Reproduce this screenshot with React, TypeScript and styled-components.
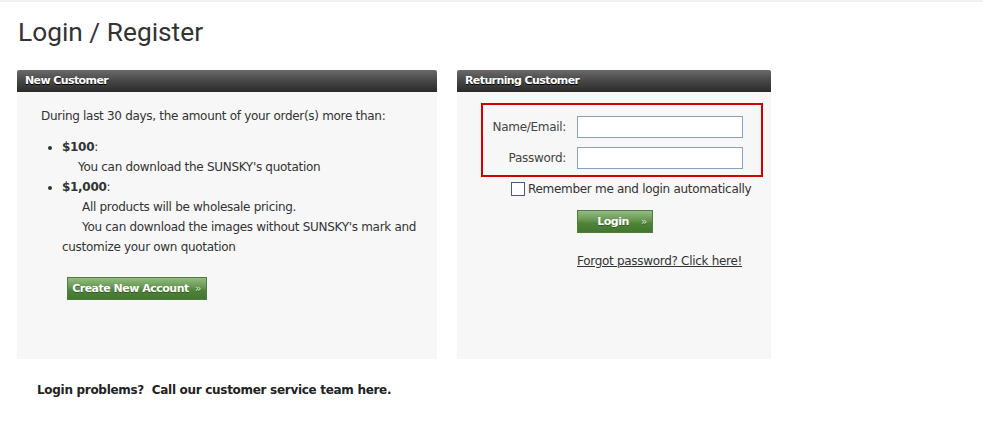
import styled, { createGlobalStyle } from "styled-components";

const GlobalStyle = createGlobalStyle`
  html, body {
    margin: 0;
    padding: 0;
    background: #fff;
  }
  body {
    font-family: "DejaVu Sans", Verdana, sans-serif;
    font-size: 12px;
    letter-spacing: -0.3px;
    color: #333;
  }
`;

const Page = styled.div`
  width: 983px;
  border-top: 2px solid #f0f0f0;
  padding: 0 0 0 17px;
  box-sizing: border-box;
`;

const Title = styled.h1`
  margin: 0;
  padding: 14px 0 0 1px;
  height: 68px;
  box-sizing: border-box;
  font-family: Roboto, "Liberation Sans", sans-serif;
  font-size: 26.3px;
  font-weight: normal;
  letter-spacing: 0;
  color: #333;
  line-height: 32px;
`;

const Columns = styled.div`
  display: flex;
  gap: 20px;
  align-items: stretch;
`;

const Panel = styled.section<{ $width: number }>`
  width: ${(p) => p.$width}px;
  height: 289px;
  display: flex;
  flex-direction: column;
  background: #f7f7f7;
`;

const PanelHeader = styled.div`
  height: 22px;
  line-height: 22px;
  padding-left: 8px;
  border-radius: 2px 2px 0 0;
  background: linear-gradient(#6a6a6a, #474747 50%, #2a2a2a);
  color: #fff;
  font-size: 11px;
  font-weight: bold;
  letter-spacing: -0.6px;
  text-shadow: 0 1px 0 #000;
`;

const NewBody = styled.div`
  padding: 14px 0 0 24px;
  line-height: 20px;
`;

const Intro = styled.p`
  margin: 0 0 11px;
`;

const Tiers = styled.ul`
  margin: 0;
  padding: 0 0 0 21px;
  list-style: disc;
`;

const Tier = styled.li`
  strong {
    font-weight: bold;
  }
`;

const Indent = styled.div<{ $indent: number }>`
  padding-left: ${(p) => p.$indent}px;
`;

const GreenButton = styled.button<{ $width: number; $gap: number }>`
  display: inline-flex;
  align-items: center;
  justify-content: flex-end;
  gap: ${(p) => p.$gap}px;
  width: ${(p) => p.$width}px;
  height: 23px;
  padding: 0 5px 0 0;
  border: 1px solid #4f7d3c;
  background: linear-gradient(#93bb83, #6a9a55 40%, #4d8238 60%, #437731);
  color: #fff;
  font-family: "DejaVu Sans", Verdana, sans-serif;
  font-size: 11px;
  font-weight: bold;
  letter-spacing: -0.5px;
  text-shadow: 0 1px 0 #35591f;
  cursor: pointer;
`;

const Chevron = styled.span`
  font-size: 11px;
  font-weight: normal;
  color: #d7e8cc;
`;

const CreateWrap = styled.div`
  margin: 20px 0 0 26px;
`;

const ReturnBody = styled.div`
  padding: 11px 0 0 24px;
`;

const RedBox = styled.div`
  width: 282px;
  height: 74px;
  box-sizing: border-box;
  border: 2px solid #d40000;
  padding: 11px 0 0 0;
  display: grid;
  grid-template-columns: 83px 166px;
  grid-template-rows: 22px 22px;
  align-content: start;
  column-gap: 11px;
  row-gap: 9px;
  align-items: center;
`;

const Label = styled.label`
  text-align: right;
  color: #444;
`;

const TextInput = styled.input`
  width: 166px;
  height: 22px;
  box-sizing: border-box;
  border: 1px solid #8aa0b4;
  background: #fff;
  margin: 0;
`;

const RememberRow = styled.label`
  display: flex;
  align-items: center;
  gap: 3px;
  margin: 5px 0 0 30px;
  color: #333;
`;

const Box = styled.span`
  width: 12px;
  height: 12px;
  border: 1px solid #4a5d6e;
  background: #fff;
  display: inline-block;
`;

const LoginWrap = styled.div`
  margin: 14px 0 0 96px;
`;

const Forgot = styled.a`
  display: inline-block;
  margin: 21px 0 0 96px;
  color: #333;
  text-decoration: underline;
`;

const Footer = styled.p`
  margin: 0;
  padding: 24px 0 0 20px;
  font-weight: bold;
  font-size: 12px;
  color: #222;
`;

export default function App() {
  return (
    <>
      <GlobalStyle />
      <Page>
        <Title>Login / Register</Title>
        <Columns>
          <Panel $width={420}>
            <PanelHeader>New Customer</PanelHeader>
            <NewBody>
              <Intro>During last 30 days, the amount of your order(s) more than:</Intro>
              <Tiers>
                <Tier>
                  <strong>$100</strong>:
                  <Indent $indent={16}>You can download the SUNSKY's quotation</Indent>
                </Tier>
                <Tier>
                  <strong>$1,000</strong>:
                  <Indent $indent={20}>All products will be wholesale pricing.</Indent>
                  <Indent $indent={20}>
                    You can download the images without SUNSKY's mark and
                  </Indent>
                  customize your own quotation
                </Tier>
              </Tiers>
              <CreateWrap>
                <GreenButton $width={140} $gap={6}>
                  Create New Account <Chevron>»</Chevron>
                </GreenButton>
              </CreateWrap>
            </NewBody>
          </Panel>
          <Panel $width={314}>
            <PanelHeader>Returning Customer</PanelHeader>
            <ReturnBody>
              <RedBox>
                <Label htmlFor="name">Name/Email:</Label>
                <TextInput id="name" type="text" />
                <Label htmlFor="pass">Password:</Label>
                <TextInput id="pass" type="password" />
              </RedBox>
              <RememberRow>
                <Box />
                Remember me and login automatically
              </RememberRow>
              <LoginWrap>
                <GreenButton $width={76} $gap={12}>
                  Login <Chevron>»</Chevron>
                </GreenButton>
              </LoginWrap>
              <Forgot href="#">Forgot password? Click here!</Forgot>
            </ReturnBody>
          </Panel>
        </Columns>
        <Footer>Login problems?&nbsp; Call our customer service team here.</Footer>
      </Page>
    </>
  );
}
